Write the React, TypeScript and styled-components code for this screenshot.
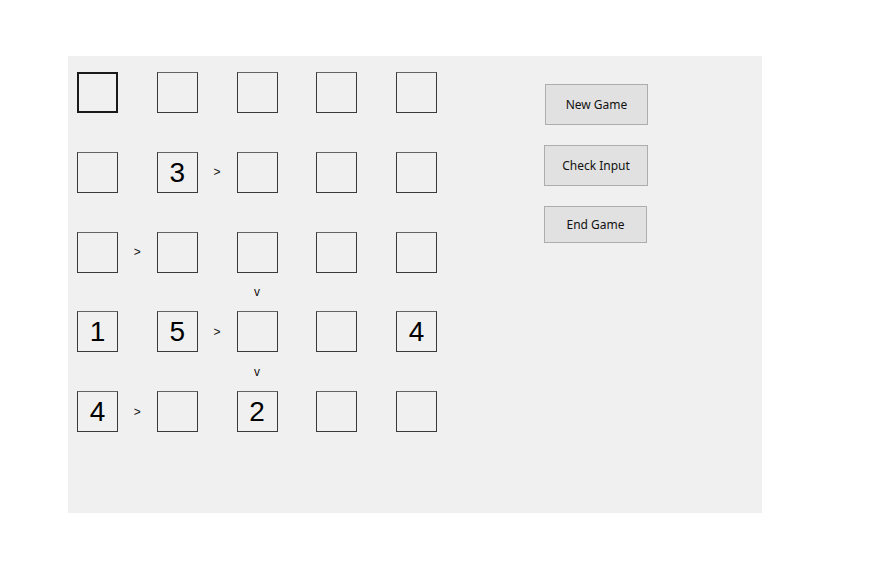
import React from "react";
import styled, { createGlobalStyle } from "styled-components";

const Global = createGlobalStyle`
  html, body { margin: 0; padding: 0; background: #ffffff; }
  body { font-family: "Liberation Sans", Arial, sans-serif; }
`;

const Page = styled.div`
  padding: 56px 0 0 68px;
`;

const Panel = styled.div`
  width: 694px;
  height: 457px;
  background: #f0f0f0;
  display: flex;
  align-items: flex-start;
  box-sizing: border-box;
  padding: 16px 0 0 9px;
`;

const Board = styled.div`
  display: grid;
  grid-template-columns: 41px 38.75px 41px 38.75px 41px 38.75px 41px 38.75px 41px;
  grid-template-rows: 41px 38.75px 41px 38.75px 41px 38.75px 41px 38.75px 41px;
`;

const Cell = styled.div<{ $r: number; $c: number; $focused?: boolean }>`
  grid-row: ${(p) => p.$r * 2 + 1};
  grid-column: ${(p) => p.$c * 2 + 1};
  box-sizing: border-box;
  border: ${(p) => (p.$focused ? "2px solid #1a1a1a" : "1px solid #3a3a3a")};
  border-top-color: ${(p) => (p.$focused ? "#1a1a1a" : "#646464")};
  background: #f0f0f0;
  display: flex;
  align-items: center;
  justify-content: center;
  font-family: "Liberation Sans", Arial, sans-serif;
  font-size: 28px;
  line-height: 1;
  color: #000;
  padding-top: 1px;
`;

const Sign = styled.div<{ $r: number; $c: number }>`
  grid-row: ${(p) => p.$r + 1};
  grid-column: ${(p) => p.$c + 1};
  display: flex;
  align-items: center;
  justify-content: center;
  font-family: "Liberation Sans", Arial, sans-serif;
  font-size: 12px;
  color: #111;
`;

const Controls = styled.div`
  margin-left: 107px;
  padding-top: 12px;
  display: flex;
  flex-direction: column;
  align-items: flex-start;
  gap: 20px;
`;

const Button = styled.button<{ $h: number; $w: number; $x?: number }>`
  width: ${(p) => p.$w}px;
  height: ${(p) => p.$h}px;
  margin: 0 0 0 ${(p) => p.$x ?? 0}px;
  box-sizing: border-box;
  background: #e1e1e1;
  border: 1px solid #adadad;
  font-family: "Noto Sans", "Open Sans", sans-serif;
  font-size: 12px;
  color: #111;
  padding: 0;
`;

const values: Record<string, string> = {
  "1,1": "3",
  "3,0": "1",
  "3,1": "5",
  "3,4": "4",
  "4,0": "4",
  "4,2": "2",
};

// sign positions in the 9x9 grid (row, col) indices
const signs: { r: number; c: number; t: string }[] = [
  { r: 2, c: 3, t: ">" },
  { r: 4, c: 1, t: ">" },
  { r: 5, c: 4, t: "v" },
  { r: 6, c: 3, t: ">" },
  { r: 7, c: 4, t: "v" },
  { r: 8, c: 1, t: ">" },
];

export default function App() {
  const cells = [];
  for (let r = 0; r < 5; r++) {
    for (let c = 0; c < 5; c++) {
      cells.push(
        <Cell key={`${r}-${c}`} $r={r} $c={c} $focused={r === 0 && c === 0}>
          {values[`${r},${c}`] ?? ""}
        </Cell>
      );
    }
  }
  return (
    <>
      <Global />
      <Page>
        <Panel>
          <Board>
            {cells}
            {signs.map((s) => (
              <Sign key={`${s.r}-${s.c}`} $r={s.r} $c={s.c}>
                {s.t}
              </Sign>
            ))}
          </Board>
          <Controls>
            <Button $w={103} $h={41} $x={1}>New Game</Button>
            <Button $w={104} $h={41}>Check Input</Button>
            <Button $w={103} $h={37}>End Game</Button>
          </Controls>
        </Panel>
      </Page>
    </>
  );
}
